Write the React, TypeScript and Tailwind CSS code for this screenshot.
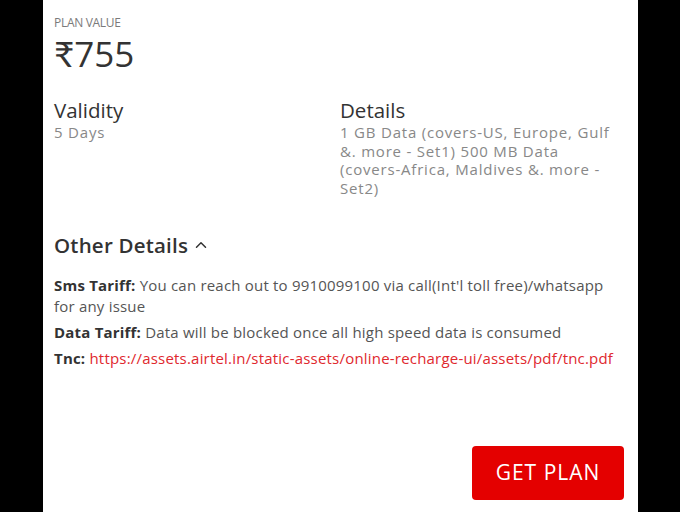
import { ChevronUp } from 'lucide-react';

export default function App() {
  return (
    <div className="h-[512px] w-[680px] bg-black flex overflow-hidden" style={{ fontFamily: '"Open Sans", Lato, sans-serif' }}>
      <div className="ml-[43px] w-[595px] bg-white flex flex-col px-[11px] pt-[15px]">
        <p className="text-[12px] leading-[16px] text-[#7a7a7a] tracking-tight">PLAN VALUE</p>
        <p className="text-[35px] leading-[40px] text-[#333] mt-[3px]">₹755</p>

        <div className="flex mt-[23px]">
          <div className="w-[286px]">
            <p className="text-[20.5px] leading-[26px] text-[#333]">Validity</p>
            <p className="text-[15px] leading-[18.5px] text-[#888] tracking-[0.8px]">5 Days</p>
          </div>
          <div className="w-[284px]">
            <p className="text-[20.5px] leading-[26px] text-[#333]">Details</p>
            <p className="text-[15px] leading-[18.5px] text-[#888] tracking-[0.8px]">
              1 GB Data (covers-US, Europe, Gulf &amp;. more - Set1) 500 MB Data (covers-Africa, Maldives &amp;. more - Set2)
            </p>
          </div>
        </div>

        <div className="flex items-center mt-[35px] gap-[4px]">
          <p className="text-[20.5px] leading-[26px] text-[#333] font-semibold tracking-[0.2px]">Other Details</p>
          <ChevronUp size={18} strokeWidth={2} className="text-[#333]" />
        </div>

        <div className="mt-[17px] text-[15px] leading-[21px] text-[#555] tracking-[0.2px]">
          <p><span className="font-bold text-[#333]">Sms Tariff:</span> You can reach out to 9910099100 via call(Int'l toll free)/whatsapp for any issue</p>
          <p className="mt-[5px]"><span className="font-bold text-[#333]">Data Tariff:</span> Data will be blocked once all high speed data is consumed</p>
          <p className="mt-[5px]"><span className="font-bold text-[#333]">Tnc:</span> <span className="text-[#e0282e]">https://assets.airtel.in/static-assets/online-recharge-ui/assets/pdf/tnc.pdf</span></p>
        </div>

        <div className="flex justify-end mt-auto mb-[12px] pr-[3px]">
          <button className="w-[152px] h-[54px] bg-[#e40000] rounded-[4px] text-white text-[21px] tracking-[1px]">GET PLAN</button>
        </div>
      </div>
    </div>
  );
}
